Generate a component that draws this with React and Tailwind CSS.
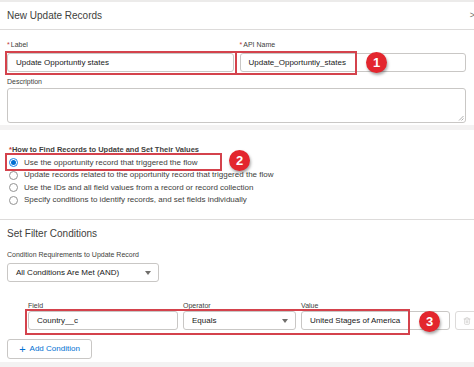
import React from 'react';
import { Trash2 } from 'lucide-react';

const font = { fontFamily: '"Liberation Sans", Arial, sans-serif' };

const Label = ({ children, required }) => (
  <div className="h-[10px] leading-[10px] text-[7px] text-[#3e3e3c] whitespace-nowrap">
    {required && <span className="text-[#c23934] mr-[1px]">*</span>}
    {children}
  </div>
);

const Input = ({ value, className = '' }) => (
  <div
    className={`h-[19px] flex items-center px-[8px] border border-[#c9c7c5] rounded-[3px] bg-white text-[8px] text-[#181818] whitespace-nowrap overflow-hidden ${className}`}
  >
    {value}
  </div>
);

const Select = ({ value, className = '' }) => (
  <div
    className={`h-[19px] flex items-center justify-between pl-[8px] pr-[7px] border border-[#c9c7c5] rounded-[3px] bg-white text-[8px] text-[#181818] whitespace-nowrap ${className}`}
  >
    <span>{value}</span>
    <span className="w-0 h-0 border-l-[3px] border-r-[3px] border-t-[4px] border-l-transparent border-r-transparent border-t-[#706e6b]"></span>
  </div>
);

const Radio = ({ checked, children }) => (
  <div className="h-[12.5px] flex items-center pl-[9px] gap-[6px] text-[8px] text-[#3e3e3c] whitespace-nowrap">
    <span
      className={`w-[9px] h-[9px] rounded-full border flex items-center justify-center bg-white ${
        checked ? 'border-[#1589ee]' : 'border-[#939393]'
      }`}
    >
      {checked && <span className="w-[5px] h-[5px] rounded-full bg-[#0070d2]"></span>}
    </span>
    <span>{children}</span>
  </div>
);

const Badge = ({ n, className }) => (
  <div
    className={`absolute w-[21px] h-[21px] rounded-full bg-[#e3262e] text-white text-[13px] font-bold flex items-center justify-center shadow-[1px_2px_3px_rgba(0,0,0,0.35)] ${className}`}
  >
    {n}
  </div>
);

const App = () => {
  return (
    <div className="relative w-[474px] h-[367px] overflow-hidden bg-white flex flex-col" style={font}>
      {/* top strip */}
      <div className="h-[2px] bg-[#ecebea]"></div>

      {/* header */}
      <div className="h-[28px] flex items-center justify-between pl-[7px] border-b border-[#dddbda]">
        <span className="text-[10px] text-[#3e3e3c]">New Update Records</span>
        <span className="text-[9px] text-[#706e6b] -mr-[1px]">&gt;</span>
      </div>

      {/* label / api name / description */}
      <div className="pl-[7px] pr-[8px] pt-[10px] pb-[2px]">
        <div className="grid grid-cols-2 gap-x-[6px]">
          <div>
            <Label required>Label</Label>
            <Input className="mt-[3px]" value="Update Opportuntiy states" />
          </div>
          <div>
            <Label required>API Name</Label>
            <Input className="mt-[3px]" value="Update_Opportuntiy_states" />
          </div>
        </div>
        <div className="mt-[5px]">
          <Label>Description</Label>
          <div className="relative mt-[1px] h-[35px] border border-[#c9c7c5] rounded-[3px]">
            <svg className="absolute right-[1px] bottom-[1px]" width="6" height="6" viewBox="0 0 6 6">
              <path d="M1 5.5 L5.5 1 M3.5 5.5 L5.5 3.5" stroke="#999" strokeWidth="0.8" />
            </svg>
          </div>
        </div>
      </div>

      <div className="h-[5px] bg-[#f3f2f2]"></div>

      {/* how to find records */}
      <div className="h-[90px] pt-[15px] border-b border-[#dddbda]">
        <div className="h-[10px] leading-[10px] pl-[9px] text-[7.5px] font-bold text-[#3e3e3c] whitespace-nowrap">
          <span className="text-[#c23934]">*</span>How to Find Records to Update and Set Their Values
        </div>
        <div className="mt-[1.5px]">
          <Radio checked>Use the opportunity record that triggered the flow</Radio>
          <Radio>Update records related to the opportunity record that triggered the flow</Radio>
          <Radio>Use the IDs and all field values from a record or record collection</Radio>
          <Radio>Specify conditions to identify records, and set fields individually</Radio>
        </div>
      </div>

      {/* filter conditions */}
      <div className="h-[142px] pl-[7px] pt-[7px]">
        <div className="h-[14px] leading-[14px] text-[10px] text-[#3e3e3c]">Set Filter Conditions</div>
        <div className="mt-[9px]">
          <Label>Condition Requirements to Update Record</Label>
          <Select className="mt-[3px] w-[152px]" value="All Conditions Are Met (AND)" />
        </div>

        <div className="mt-[19px] ml-[21px] flex gap-[5px]">
          <div className="w-[150px] shrink-0">
            <Label>Field</Label>
            <Input value="Country__c" />
          </div>
          <div className="w-[113px] shrink-0">
            <Label>Operator</Label>
            <Select value="Equals" />
          </div>
          <div className="w-[149px] shrink-0">
            <Label>Value</Label>
            <Input value="United Stages of America" />
          </div>
          <div className="w-[24px] shrink-0 pt-[10px]">
            <div className="h-[19px] flex items-center justify-center border border-[#dddbda] rounded-[3px] bg-white">
              <Trash2 size={8} color="#c9c7c5" strokeWidth={2} />
            </div>
          </div>
        </div>

        <div className="mt-[9px] w-[85px] h-[20px] flex items-center justify-center gap-[4px] border border-[#c9c7c5] rounded-[3px] text-[8px] text-[#0070d2] whitespace-nowrap">
          <span className="text-[11px] leading-none">+</span>
          <span>Add Condition</span>
        </div>
      </div>

      <div className="flex-1 bg-[#f3f2f2]"></div>

      {/* annotations */}
      <div className="absolute left-[5px] top-[51px] w-[232px] h-[24px] border-2 border-[#d4424c]"></div>
      <div className="absolute left-[235px] top-[51px] w-[122px] h-[24px] border-2 border-[#d4424c]"></div>
      <div className="absolute left-[5px] top-[153px] w-[217px] h-[18px] border-2 border-[#d4424c]"></div>
      <div className="absolute left-[25px] top-[309px] w-[385px] h-[26px] border-2 border-[#d4424c]"></div>
      <Badge n="1" className="left-[366px] top-[52px]" />
      <Badge n="2" className="left-[229px] top-[150px]" />
      <Badge n="3" className="left-[419px] top-[311px]" />
    </div>
  );
};

export default App;
